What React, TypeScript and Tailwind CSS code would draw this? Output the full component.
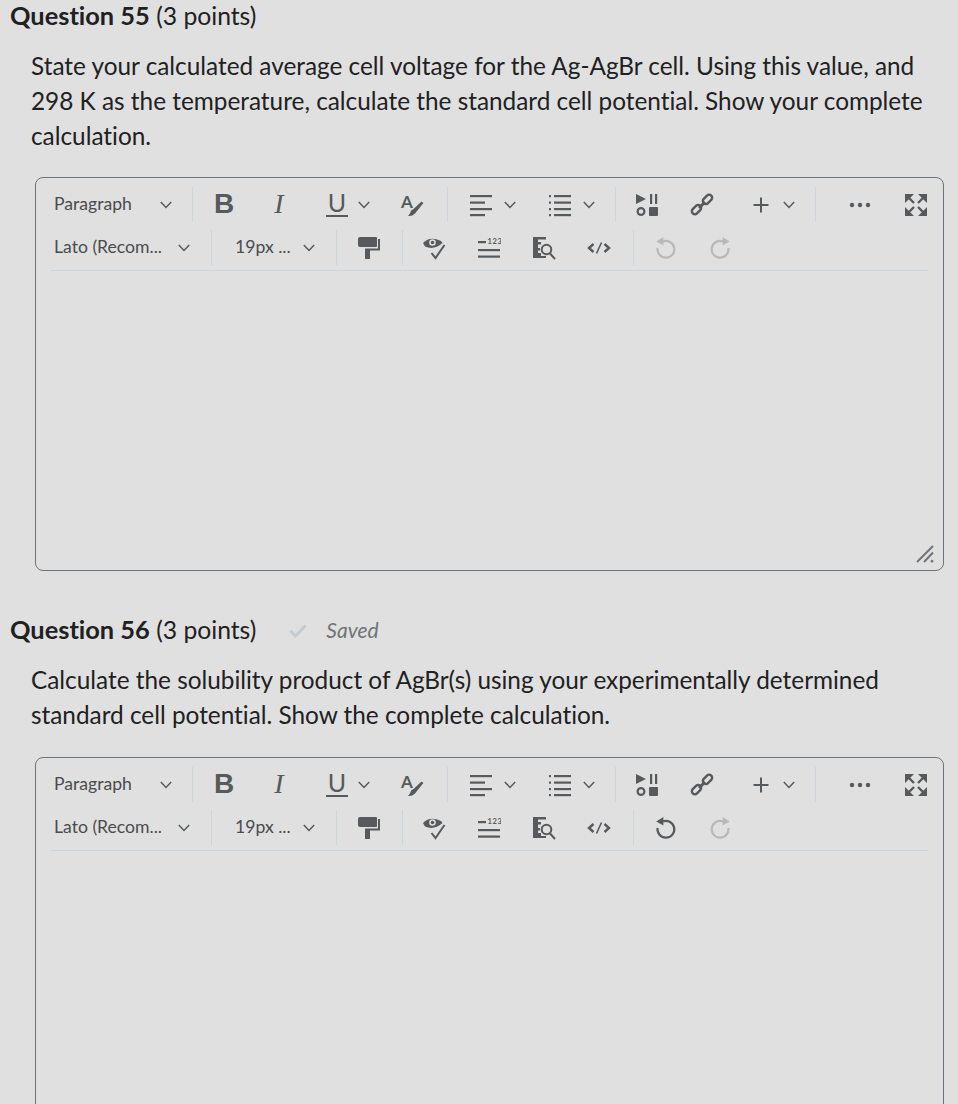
import React from 'react';

const Chevron = ({ className = '' }: { className?: string }) => (
  <svg className={`shrink-0 ${className}`} width="12" height="8" viewBox="0 0 12 8" fill="none" stroke="#565a5c" strokeWidth="1.5">
    <path d="M0.8 1 L6 6.4 L11.2 1" />
  </svg>
);

const Divider = ({ className = '' }: { className?: string }) => (
  <div className={`h-[35px] w-px shrink-0 bg-[#cdd5dc] ${className}`} />
);

const Icon = ({ className = '', children }: { className?: string; children: React.ReactNode }) => (
  <svg className={`shrink-0 ${className}`} width="24" height="24" viewBox="0 0 24 24" fill="#565a5c" stroke="none">
    {children}
  </svg>
);

const Cell = ({ className = '', children }: { className?: string; children: React.ReactNode }) => (
  <div className={`flex h-6 w-6 shrink-0 items-center justify-center ${className}`}>{children}</div>
);

const ToolbarText = ({ className = '', children }: { className?: string; children: React.ReactNode }) => (
  <span className={`shrink-0 whitespace-nowrap text-[17.6px] leading-none text-[#494c4e] -translate-y-px ${className}`}>{children}</span>
);

const Arc = ({ flip, color, className = '' }: { flip?: boolean; color: string; className?: string }) => (
  <svg className={`shrink-0 ${className}`} width="24" height="24" viewBox="0 0 24 24" fill="none">
    <g transform={flip ? 'translate(24 0) scale(-1 1)' : undefined}>
      <path d="M9 5.4 A 8.4 8.4 0 1 1 3.6 12" stroke={color} strokeWidth="2.2" />
      <path d="M2.2 5.4 L9.4 1 L9.4 9.6 Z" fill={color} />
    </g>
  </svg>
);

const Toolbar = ({ undoActive }: { undoActive?: boolean }) => (
  <div className="mx-[15px] border-b border-[#cdd5dc] pt-[9px] pb-[5px]">
    <div className="flex h-[35px] items-center">
      <ToolbarText className="ml-[3px] w-[100px]">Paragraph</ToolbarText>
      <Chevron className="ml-[6px]" />
      <Divider className="ml-[20px]" />
      <Cell className="ml-[19px]">
        <span className="-translate-y-px font-['Liberation_Sans',sans-serif] text-[28px] leading-none font-bold text-[#565a5c]">B</span>
      </Cell>
      <Cell className="ml-[31px]">
        <span className="-translate-y-px font-['Liberation_Serif',serif] text-[28px] leading-none text-[#565a5c] italic">I</span>
      </Cell>
      <Cell className="relative ml-[34px]">
        <span className="-translate-y-[2px] font-['Lato',sans-serif] text-[25px] leading-none text-[#565a5c]">U</span>
        <span className="absolute right-px bottom-0 left-px h-[2px] bg-[#565a5c]" />
      </Cell>
      <Chevron className="ml-[9px]" />
      <Cell className="relative ml-[30px]">
        <span className="absolute top-0 left-px font-['Lato',sans-serif] text-[17px] leading-none font-bold text-[#565a5c]">A</span>
        <svg className="absolute inset-0" width="24" height="24" viewBox="0 0 24 24" fill="#565a5c">
          <path d="M21.5 8.5 L23.4 10 L15 20.5 Q12 23.6 8 23 Q10 21 10.8 18.5 Q11.2 16.5 13 16.4 Z" />
        </svg>
      </Cell>
      <Divider className="ml-[23px]" />
      <Icon className="ml-[21px]">
        <rect x="1" y="2" width="22" height="2.2" />
        <rect x="1" y="8.5" width="15" height="2.2" />
        <rect x="1" y="15" width="22" height="2.2" />
        <rect x="1" y="21" width="15" height="2.2" />
      </Icon>
      <Chevron className="ml-[11px]" />
      <Icon className="ml-[32px]">
        <rect x="6" y="2" width="17" height="2.2" />
        <rect x="6" y="8.5" width="17" height="2.2" />
        <rect x="6" y="15" width="17" height="2.2" />
        <rect x="6" y="21" width="17" height="2.2" />
        <rect x="1" y="2" width="2" height="2.2" />
        <rect x="1" y="8.5" width="2" height="2.2" />
        <rect x="1" y="15" width="2" height="2.2" />
        <rect x="1" y="21" width="2" height="2.2" />
      </Icon>
      <Chevron className="ml-[11px]" />
      <Divider className="ml-[20px]" />
      <Icon className="ml-[19px]">
        <path d="M1 1 L11 6 L1 11 Z" />
        <rect x="15" y="1" width="2.2" height="10" />
        <rect x="20" y="1" width="2.2" height="10" />
        <circle cx="6" cy="18.5" r="3.4" fill="none" stroke="#565a5c" strokeWidth="2.2" />
        <rect x="14" y="14" width="9" height="9" rx="1" />
      </Icon>
      <Icon className="ml-[31px]">
        <g fill="none" stroke="#565a5c" strokeWidth="2.4">
          <rect x="1.2" y="13.6" width="10.6" height="6" rx="3" transform="rotate(-45 6.5 16.6)" />
          <rect x="12.2" y="3.4" width="10.6" height="6" rx="3" transform="rotate(-45 17.5 6.4)" />
          <path d="M9 15 L15 9" strokeWidth="3" />
        </g>
      </Icon>
      <Icon className="ml-[35px]">
        <rect x="4.5" y="11" width="15" height="2" />
        <rect x="11" y="4.5" width="2" height="15" />
      </Icon>
      <Chevron className="ml-[10px]" />
      <Divider className="ml-[20px]" />
      <Icon className="ml-[32px]">
        <circle cx="4" cy="12" r="2.2" />
        <circle cx="12" cy="12" r="2.2" />
        <circle cx="20" cy="12" r="2.2" />
      </Icon>
      <Icon className="ml-[32px]">
        <path d="M1 1 L10 1 L1 10 Z M23 1 L14 1 L23 10 Z M1 23 L10 23 L1 14 Z M23 23 L14 23 L23 14 Z" />
        <path d="M4 4 L10 10 M20 4 L14 10 M4 20 L10 14 M20 20 L14 14" stroke="#565a5c" strokeWidth="2.4" />
      </Icon>
    </div>
    <div className="mt-[8px] flex h-[35px] items-center">
      <ToolbarText className="ml-[3px] w-[108px]">Lato (Recom...</ToolbarText>
      <Chevron className="ml-[16px]" />
      <Divider className="ml-[21px]" />
      <ToolbarText className="ml-[23px] w-[55px]">19px ...</ToolbarText>
      <Chevron className="ml-[13px]" />
      <Divider className="ml-[21px]" />
      <Icon className="ml-[20px]">
        <path d="M1 3 Q1 1 3 1 L19 1 Q20 1 20 2 L20 10 Q20 11 19 11 L3 11 Q1 11 1 9 Z" />
        <path d="M21 3 L23 3 L23 14.5 L13 14.5 L13 23 L8 23 L8 12.5 L21 12.5 Z" />
      </Icon>
      <Divider className="ml-[21px]" />
      <Icon className="ml-[19px]">
        <path d="M1 7 Q8 -0.5 19 5 L20.5 7 Q12 14.5 3 10.5 Z" />
        <circle cx="10.5" cy="6.5" r="3.3" fill="#e0e0e0" />
        <circle cx="10.5" cy="6.5" r="1.8" />
        <path d="M9.5 17 L13.5 22 L22.5 9" fill="none" stroke="#565a5c" strokeWidth="2" />
      </Icon>
      <svg className="ml-[31px] shrink-0" width="24" height="24" viewBox="0 0 24 24" fill="#565a5c">
        <rect x="1" y="5" width="8" height="2.2" />
        <text x="10.5" y="8" fontFamily="Lato, sans-serif" fontWeight="700" fontSize="7.5" letterSpacing="0.6">123</text>
        <rect x="1" y="13" width="22" height="2.2" />
        <rect x="1" y="19.5" width="22" height="2.2" />
      </svg>
      <Icon className="ml-[31px]">
        <path d="M1 1 L14 1 L14 3.5 L6 3.5 L6 6 L9 6 L9 8.5 L6 8.5 L6 12 L8 12 L8 14.5 L6 14.5 L6 17 L9 17 L9 20 L14 20 L14 22 L1 22 Z" />
        <circle cx="14.5" cy="13.5" r="4.8" fill="none" stroke="#565a5c" strokeWidth="2" />
        <path d="M18 17.5 L23 23" stroke="#565a5c" strokeWidth="2" />
      </Icon>
      <svg className="ml-[31px] shrink-0" width="24" height="24" viewBox="0 0 24 24" fill="none" stroke="#565a5c">
        <path d="M6.5 8 L2 12 L6.5 16 M17.5 8 L22 12 L17.5 16" strokeWidth="2.4" />
        <path d="M14.5 6.5 L9.5 17.5" strokeWidth="1.6" />
      </svg>
      <Divider className="ml-[22px]" />
      <Arc className="ml-[20px]" color={undoActive ? '#565a5c' : '#b7b9ba'} />
      <Arc className="ml-[30px]" color="#b7b9ba" flip />
    </div>
  </div>
);

const Editor = ({ undoActive }: { undoActive?: boolean }) => (
  <div className="relative mr-[14px] ml-[35px] h-[394px] shrink-0 rounded-lg border border-[#6e7477]">
    <Toolbar undoActive={undoActive} />
    <svg className="absolute right-[8px] bottom-[6px]" width="20" height="20" viewBox="0 0 20 20" fill="none" stroke="#6e7477" strokeWidth="2">
      <path d="M2 18 L18 2 M9 18 L18 8.5" />
      <path d="M16 16.4 L18 18" strokeWidth="2.4" />
    </svg>
  </div>
);

export default function App() {
  return (
    <div className="flex h-[1104px] w-[958px] flex-col overflow-hidden bg-[#e0e0e0] font-['Lato',sans-serif] text-[#202122] [font-variant-ligatures:none]">
      <h2 className="ml-[10px] h-[32px] text-[24.7px] leading-[31px]">
        <strong className="text-[25.4px] font-bold">Question 55</strong> (3 points)
      </h2>
      <p className="mt-[17px] ml-[31px] text-[24.35px] leading-[35px] whitespace-nowrap">
        State your calculated average cell voltage for the Ag-AgBr cell. Using this value, and
        <br />
        298 K as the temperature, calculate the standard cell potential. Show your complete
        <br />
        calculation.
      </p>
      <div className="mt-[24px]">
        <Editor />
      </div>
      <div className="mt-[43px] ml-[10px] flex h-[33px] items-center">
        <h2 className="-translate-y-px text-[24.7px] leading-[33px]">
          <strong className="text-[25.4px] font-bold">Question 56</strong> (3 points)
        </h2>
        <svg className="ml-[33px]" width="18" height="14" viewBox="0 0 18 14" fill="none" stroke="#c4ccd2" strokeWidth="3">
          <path d="M1.5 7 L6.5 12 L16.5 1.5" />
        </svg>
        <span className="ml-[19px] -translate-y-px text-[21px] text-[#6e7477] italic">Saved</span>
      </div>
      <p className="mt-[15px] ml-[31px] text-[24.35px] leading-[35px] whitespace-nowrap">
        Calculate the solubility product of AgBr(s) using your experimentally determined
        <br />
        standard cell potential. Show the complete calculation.
      </p>
      <div className="mt-[25px]">
        <Editor undoActive />
      </div>
    </div>
  );
}
